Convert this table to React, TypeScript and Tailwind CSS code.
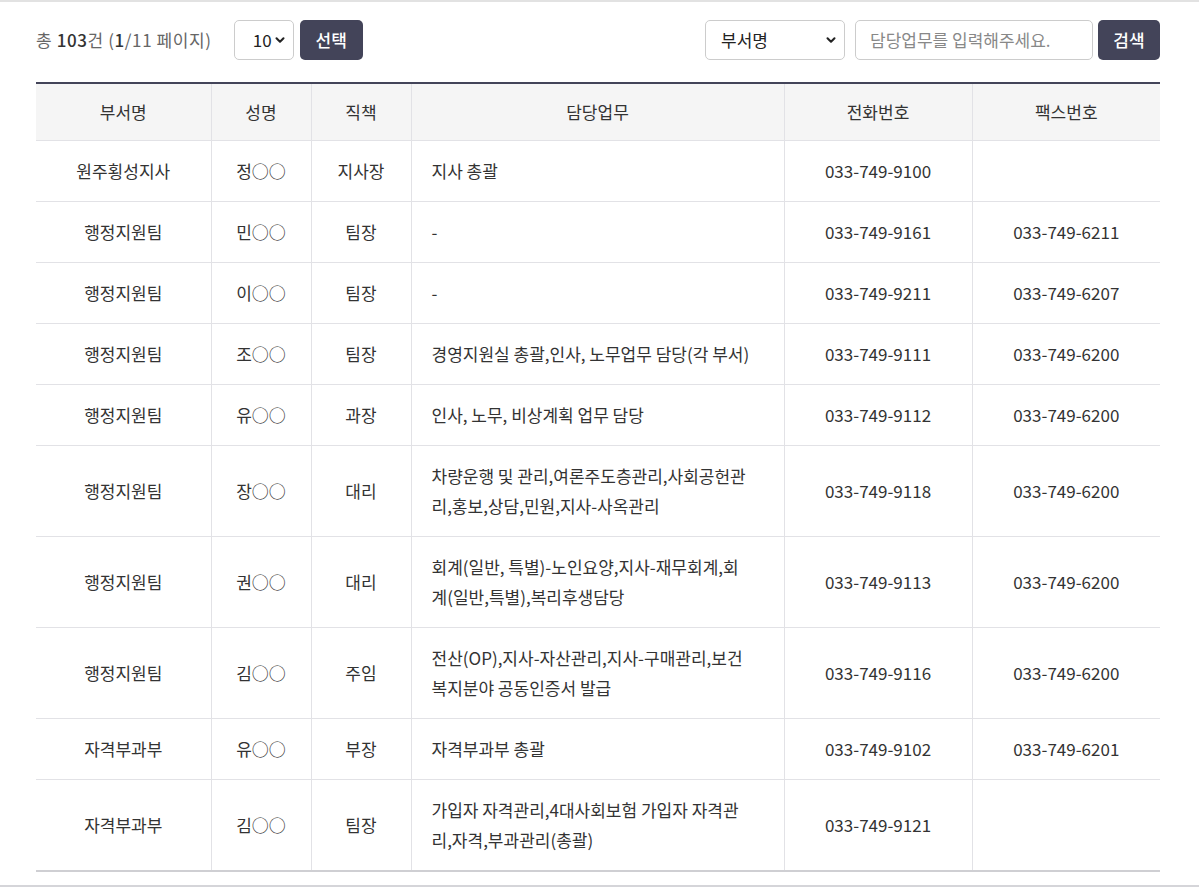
import { ChevronDown } from "lucide-react";

type Row = {
  dept: string;
  name: string;
  title: string;
  work: string[];
  tel: string;
  fax: string;
};

const rows: Row[] = [
  { dept: "원주횡성지사", name: "정○○", title: "지사장", work: ["지사 총괄"], tel: "033-749-9100", fax: "" },
  { dept: "행정지원팀", name: "민○○", title: "팀장", work: ["-"], tel: "033-749-9161", fax: "033-749-6211" },
  { dept: "행정지원팀", name: "이○○", title: "팀장", work: ["-"], tel: "033-749-9211", fax: "033-749-6207" },
  { dept: "행정지원팀", name: "조○○", title: "팀장", work: ["경영지원실 총괄,인사, 노무업무 담당(각 부서)"], tel: "033-749-9111", fax: "033-749-6200" },
  { dept: "행정지원팀", name: "유○○", title: "과장", work: ["인사, 노무, 비상계획 업무 담당"], tel: "033-749-9112", fax: "033-749-6200" },
  { dept: "행정지원팀", name: "장○○", title: "대리", work: ["차량운행 및 관리,여론주도층관리,사회공헌관", "리,홍보,상담,민원,지사-사옥관리"], tel: "033-749-9118", fax: "033-749-6200" },
  { dept: "행정지원팀", name: "권○○", title: "대리", work: ["회계(일반, 특별)-노인요양,지사-재무회계,회", "계(일반,특별),복리후생담당"], tel: "033-749-9113", fax: "033-749-6200" },
  { dept: "행정지원팀", name: "김○○", title: "주임", work: ["전산(OP),지사-자산관리,지사-구매관리,보건", "복지분야 공동인증서 발급"], tel: "033-749-9116", fax: "033-749-6200" },
  { dept: "자격부과부", name: "유○○", title: "부장", work: ["자격부과부 총괄"], tel: "033-749-9102", fax: "033-749-6201" },
  { dept: "자격부과부", name: "김○○", title: "팀장", work: ["가입자 자격관리,4대사회보험 가입자 자격관", "리,자격,부과관리(총괄)"], tel: "033-749-9121", fax: "" },
];

const headers = ["부서명", "성명", "직책", "담당업무", "전화번호", "팩스번호"];

export default function App() {
  return (
    <div
      className="min-h-[888px] w-[1199px] bg-white text-[#333]"
      style={{ fontFamily: '"Noto Sans CJK KR", "Noto Sans", sans-serif' }}
    >
      <div className="border-t-2 border-[#e2e2e2]" />
      <div className="ml-9 w-[1124px]">
        <div className="mt-[18px] flex h-10 items-center justify-between">
          <div className="flex items-center">
            <span className="text-[17px] tracking-[0.6px] text-[#666]">
              총 <b className="font-medium text-[#333]">103</b>건 (<b className="font-medium text-[#333]">1</b>/11 페이지)
            </span>
            <div className="ml-[22px] flex h-10 w-[60px] items-center justify-end rounded-[5px] border border-[#ccc] pr-[6px] text-[17px] text-[#222]">
              <span>10</span>
              <ChevronDown className="ml-[1px] h-[14px] w-[14px]" strokeWidth={3.5} />
            </div>
            <button className="ml-[6px] h-10 w-[63px] rounded-[5px] bg-[#434459] text-[17px] font-medium text-white">
              선택
            </button>
          </div>
          <div className="flex items-center">
            <div className="flex h-10 w-[140px] items-center justify-between rounded-[5px] border border-[#ccc] pl-[15px] pr-[6px] text-[17px] text-[#222]">
              <span>부서명</span>
              <ChevronDown className="h-[14px] w-[14px]" strokeWidth={3.5} />
            </div>
            <div className="ml-[10px] flex h-10 w-[238px] items-center rounded-[5px] border border-[#ccc] px-[14px] text-[17px] text-[#888]">
              담당업무를 입력해주세요.
            </div>
            <button className="ml-[5px] h-10 w-[62px] rounded-[5px] bg-[#434459] text-[17px] font-medium text-white">
              검색
            </button>
          </div>
        </div>

        <table className="mt-[22px] w-[1124px] table-fixed border-collapse border-t-2 border-b-2 border-t-[#434459] border-b-[#cfcfd3] text-[17px]">
          <colgroup>
            <col className="w-[175px]" />
            <col className="w-[100px]" />
            <col className="w-[100px]" />
            <col className="w-[373px]" />
            <col className="w-[188px]" />
            <col className="w-[188px]" />
          </colgroup>
          <thead>
            <tr className="bg-[#f5f5f5]">
              {headers.map((h, i) => (
                <th
                  key={h}
                  className={`h-[57px] border-b border-[#e2e2e6] text-center font-normal leading-[30px] ${
                    i > 0 ? "border-l" : ""
                  }`}
                >
                  {h}
                </th>
              ))}
            </tr>
          </thead>
          <tbody>
            {rows.map((r, i) => (
              <tr key={i} className="border-b border-[#e2e2e6] leading-[30px]">
                <td className="py-[15px] text-center">{r.dept}</td>
                <td className="border-l border-[#e2e2e6] py-[15px] text-center">{r.name}</td>
                <td className="border-l border-[#e2e2e6] py-[15px] text-center">{r.title}</td>
                <td className="border-l border-[#e2e2e6] py-[15px] pl-5 pr-2 text-left">
                  {r.work.map((line, j) => (
                    <div key={j} className="whitespace-nowrap">
                      {line}
                    </div>
                  ))}
                </td>
                <td className="border-l border-[#e2e2e6] py-[15px] text-center">{r.tel}</td>
                <td className="border-l border-[#e2e2e6] py-[15px] text-center">{r.fax}</td>
              </tr>
            ))}
          </tbody>
        </table>
      </div>
      <div className="mt-[13px] border-t-2 border-[#d5d5d9]" />
    </div>
  );
}
